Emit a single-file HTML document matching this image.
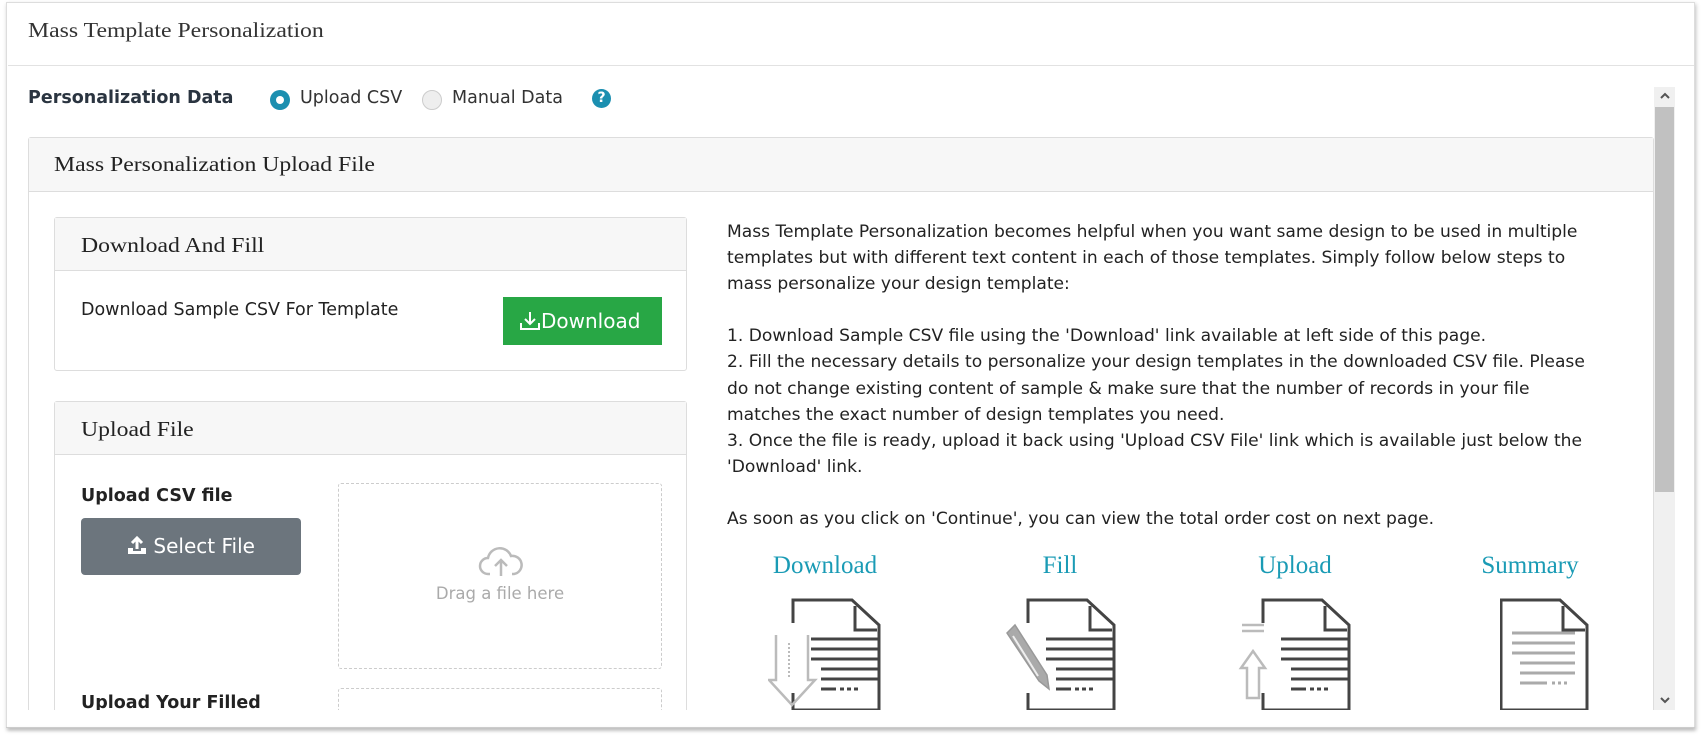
<!DOCTYPE html>
<html><head><meta charset="utf-8"><style>
*{box-sizing:border-box;margin:0;padding:0}
html,body{width:1708px;height:741px;overflow:hidden}
body{background:#fff;position:relative;font-family:"DejaVu Sans","Liberation Sans",sans-serif;color:#222}
.abs{position:absolute}
.serif{font-family:"Liberation Serif",serif;transform:scaleX(1.13);transform-origin:0 0}
.card{left:6px;top:2px;width:1689px;height:726px;border:1px solid #ddd;box-shadow:1px 2px 4px rgba(0,0,0,.25)}
.panel{border:1px solid #ddd;border-radius:3px;background:#fff}
.ph{background:#f7f7f7;border-bottom:1px solid #ddd}
.t{white-space:nowrap}
.lbl{font-family:"Liberation Serif",serif;font-size:25px;color:#1a9bb5;text-align:center}
.clip{left:0;top:0;width:1708px;height:710px;overflow:hidden}
</style></head><body>
<div class="abs card"></div>
<div class="abs serif t" style="left:28px;top:18px;font-size:21px;color:#333">Mass Template Personalization</div>
<div class="abs" style="left:8px;top:65px;width:1686px;height:1px;background:#e2e2e2"></div>

<div class="abs t" style="left:28px;top:88px;font-size:17.5px;font-weight:bold;color:#2a3440">Personalization Data</div>
<div class="abs" style="left:270px;top:90px;width:20px;height:20px;border-radius:50%;background:#1b8fb0"></div>
<div class="abs" style="left:276px;top:96px;width:8px;height:8px;border-radius:50%;background:#fff"></div>
<div class="abs t" style="left:300px;top:88px;font-size:17.5px;color:#333">Upload CSV</div>
<div class="abs" style="left:422px;top:90px;width:20px;height:20px;border-radius:50%;background:#eee;border:1px solid #ccc"></div>
<div class="abs t" style="left:452px;top:88px;font-size:17.5px;color:#333">Manual Data</div>
<div class="abs" style="left:592px;top:89px;width:19px;height:19px;border-radius:50%;background:#1b8fb0;color:#fff;font-size:14px;font-weight:bold;text-align:center;line-height:19px">?</div>

<!-- scrollbar -->
<div class="abs" style="left:1654px;top:87px;width:21px;height:623px;background:#f0f0f0"></div>
<div class="abs" style="left:1655px;top:107px;width:19px;height:385px;background:#c1c1c1"></div>
<svg class="abs" style="left:1658px;top:90px" width="14" height="12" viewBox="0 0 14 12"><path d="M3 8l4-4 4 4" fill="none" stroke="#555" stroke-width="2"/></svg>
<svg class="abs" style="left:1658px;top:694px" width="14" height="12" viewBox="0 0 14 12"><path d="M3 4l4 4 4-4" fill="none" stroke="#555" stroke-width="2"/></svg>

<div class="abs clip">
<!-- big panel -->
<div class="abs panel" style="left:28px;top:137px;width:1626px;height:600px"></div>
<div class="abs ph" style="left:29px;top:138px;width:1624px;height:54px"></div>
<div class="abs serif t" style="left:54px;top:152px;font-size:21px;color:#222">Mass Personalization Upload File</div>

<!-- download and fill -->
<div class="abs panel" style="left:54px;top:217px;width:633px;height:154px"></div>
<div class="abs ph" style="left:55px;top:218px;width:631px;height:53px"></div>
<div class="abs serif t" style="left:81px;top:233px;font-size:21px">Download And Fill</div>
<div class="abs t" style="left:81px;top:300px;font-size:17.5px">Download Sample CSV For Template</div>
<div class="abs t" style="left:503px;top:297px;width:159px;height:48px;background:#28a745;color:#fff;font-size:20px;line-height:48px;padding-left:16px">
<svg width="22" height="20" viewBox="0 0 22 20" style="vertical-align:-3px"><path d="M11 1v11M6 8l5 5 5-5M2 12v6h18v-6" fill="none" stroke="#fff" stroke-width="2"/></svg>Download</div>

<!-- upload file -->
<div class="abs panel" style="left:54px;top:401px;width:633px;height:340px"></div>
<div class="abs ph" style="left:55px;top:402px;width:631px;height:53px"></div>
<div class="abs serif t" style="left:81px;top:417px;font-size:21px">Upload File</div>
<div class="abs t" style="left:81px;top:486px;font-size:17.5px;font-weight:bold">Upload CSV file</div>
<div class="abs t" style="left:81px;top:518px;width:220px;height:57px;background:#6c757d;border-radius:4px;color:#fff;font-size:20px;line-height:57px;text-align:center">
<svg width="20" height="20" viewBox="0 0 20 20" style="vertical-align:-2px"><path d="M10 14V3M5 8l5-5 5 5" fill="none" stroke="#fff" stroke-width="3"/><path d="M1 13h5v3h8v-3h5v6H1z" fill="#fff"/></svg> Select File</div>
<div class="abs" style="left:338px;top:483px;width:324px;height:186px;border:1px dashed #ccc;border-radius:3px"></div>
<svg class="abs" style="left:478px;top:546px" width="46" height="32" viewBox="0 0 46 32"><path d="M12 28H10a8 8 0 0 1 0-16 12 12 0 0 1 23-2 9 9 0 0 1 3 18h-2" fill="none" stroke="#bbb" stroke-width="2.5"/><path d="M23 30V14M17 20l6-6 6 6" fill="none" stroke="#bbb" stroke-width="2.5"/></svg>
<div class="abs t" style="left:338px;top:584px;width:324px;text-align:center;font-size:16.5px;color:#aaa">Drag a file here</div>
<div class="abs" style="left:338px;top:688px;width:324px;height:60px;border:1px dashed #ccc;border-radius:3px"></div>
<div class="abs t" style="left:81px;top:693px;font-size:17.5px;font-weight:bold">Upload Your Filled</div>

<!-- right text -->
<div class="abs t" style="left:727px;top:219px;font-size:17.1px;line-height:26.1px;color:#222">
Mass Template Personalization becomes helpful when you want same design to be used in multiple<br>
templates but with different text content in each of those templates. Simply follow below steps to<br>
mass personalize your design template:<br><br>
1. Download Sample CSV file using the 'Download' link available at left side of this page.<br>
2. Fill the necessary details to personalize your design templates in the downloaded CSV file. Please<br>
do not change existing content of sample &amp; make sure that the number of records in your file<br>
matches the exact number of design templates you need.<br>
3. Once the file is ready, upload it back using 'Upload CSV File' link which is available just below the<br>
'Download' link.<br><br>
As soon as you click on 'Continue', you can view the total order cost on next page.</div>

<div class="abs lbl t" style="left:725px;top:552px;width:200px">Download</div>
<div class="abs lbl t" style="left:960px;top:552px;width:200px">Fill</div>
<div class="abs lbl t" style="left:1195px;top:552px;width:200px">Upload</div>
<div class="abs lbl t" style="left:1430px;top:552px;width:200px">Summary</div>

<!-- doc icons -->
<svg class="abs" style="left:768px;top:598px" width="115" height="115" viewBox="-24 0 115 115">
<path d="M1 25V2H60l27 25v85H1V95" fill="none" stroke="#444" stroke-width="3"/><path d="M63 8v24h22" fill="none" stroke="#444" stroke-width="3"/>
<g stroke="#444" stroke-width="3"><path d="M19 41h67M19 51h67M19 61h67M29 71h57M29 81h57M29 91h15"/></g><path d="M48 91h4M55 91h4M62 91h4" stroke="#444" stroke-width="3"/>
<path d="M-16 37v45h-7l23 25 23-25h-7V37" fill="none" stroke="#bbb" stroke-width="2.5"/><path d="M-3 45v35" stroke="#bbb" stroke-width="2" stroke-dasharray="2 2"/></svg>

<svg class="abs" style="left:1003px;top:598px" width="115" height="115" viewBox="-24 0 115 115">
<path d="M1 25V2H60l27 25v85H1V95" fill="none" stroke="#444" stroke-width="3"/><path d="M63 8v24h22" fill="none" stroke="#444" stroke-width="3"/>
<g stroke="#444" stroke-width="3"><path d="M19 41h67M19 51h67M19 61h67M29 71h57M29 81h57M29 91h15"/></g><path d="M48 91h4M55 91h4M62 91h4" stroke="#444" stroke-width="3"/>
<path d="M-20 35l8-8 32 50 2 14-10-8z" fill="#aaa" stroke="#999" stroke-width="1.5"/><path d="M-14 38l25 40" stroke="#eee" stroke-width="2"/></svg>

<svg class="abs" style="left:1238px;top:598px" width="115" height="115" viewBox="-24 0 115 115">
<path d="M1 25V2H60l27 25v85H1V95" fill="none" stroke="#444" stroke-width="3"/><path d="M63 8v24h22" fill="none" stroke="#444" stroke-width="3"/>
<g stroke="#444" stroke-width="3"><path d="M19 41h67M19 51h67M19 61h67M29 71h57M29 81h57M29 91h15"/></g><path d="M48 91h4M55 91h4M62 91h4" stroke="#444" stroke-width="3"/>
<path d="M-20 27h22M-20 33h22" stroke="#bbb" stroke-width="2.5"/><path d="M-15 100V70h-6l12-17 12 17h-6v30z" fill="none" stroke="#bbb" stroke-width="2.5"/></svg>

<svg class="abs" style="left:1500px;top:598px" width="92" height="115" viewBox="0 0 92 115">
<path d="M1 112V2H60l27 25v85z" fill="none" stroke="#444" stroke-width="3"/><path d="M63 8v24h22" fill="none" stroke="#444" stroke-width="3"/>
<g stroke="#aaa" stroke-width="3"><path d="M12 35h63M12 45h63M12 55h63M20 65h55M20 75h55M20 85h27"/></g><path d="M52 85h3M58 85h3M64 85h3" stroke="#aaa" stroke-width="3"/></svg>
</div>

<div class="abs" style="left:6px;top:727px;width:1689px;height:1px;background:#ccc;box-shadow:1px 2px 3px rgba(0,0,0,.25)"></div>
</body></html>
